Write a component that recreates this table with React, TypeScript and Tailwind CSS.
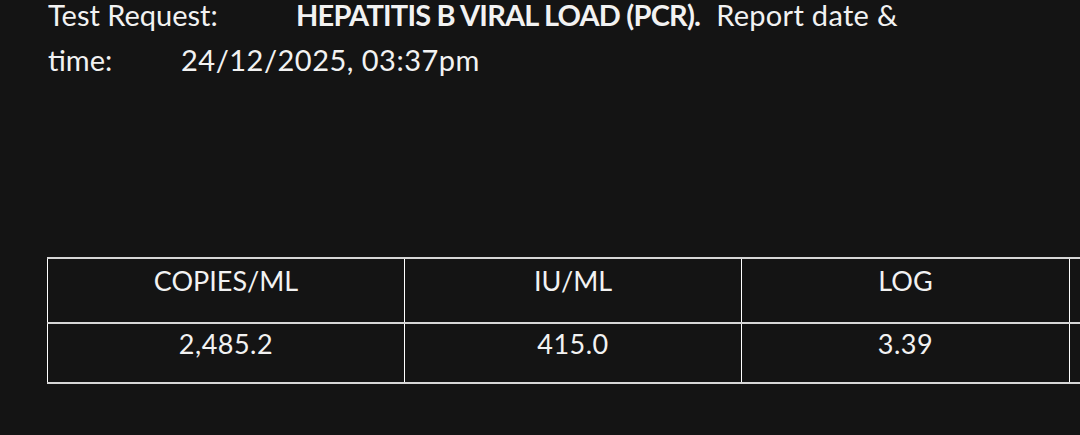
export default function App() {
  const headers = ['COPIES/ML', 'IU/ML', 'LOG', ''];
  const values = ['2,485.2', '415.0', '3.39', ''];
  const widths = ['w-[357px]', 'w-[337px]', 'w-[328px]', 'w-[357px]'];

  return (
    <div
      className="w-[1080px] h-[435px] overflow-hidden bg-[#141414] text-[#f2f2f2]"
      style={{ fontFamily: 'Lato, "Open Sans", sans-serif' }}
    >
      <div className="pl-[48px] text-[29px] leading-[29px]">
        <div className="flex whitespace-nowrap">
          <span className="w-[248px]">Test Request:</span>
          <span className="font-bold tracking-[-0.8px]">HEPATITIS B VIRAL LOAD (PCR).</span>
          <span className="ml-[16px] tracking-[0.3px]">Report date &amp;</span>
        </div>
        <div className="flex whitespace-nowrap mt-[16px]">
          <span className="w-[133px]">time:</span>
          <span className="tracking-[0.5px]">24/12/2025, 03:37pm</span>
        </div>
      </div>

      <div className="mt-[183px] ml-[47px] w-[1400px]">
        <table className="table-fixed border-collapse text-[27px] leading-[32px]">
          <tbody>
            <tr className="h-[65px]">
              {headers.map((h, i) => (
                <td
                  key={i}
                  className={`${widths[i]} border-x border-x-white border-y-2 border-y-[#d6d6d6] text-center align-top pt-[6px]`}
                >
                  {h}
                </td>
              ))}
            </tr>
            <tr className="h-[60px]">
              {values.map((v, i) => (
                <td
                  key={i}
                  className={`${widths[i]} border-x border-x-white border-y-2 border-y-[#d6d6d6] text-center align-top pt-[4px] tracking-[0.5px]`}
                >
                  {v}
                </td>
              ))}
            </tr>
          </tbody>
        </table>
      </div>
    </div>
  );
}
